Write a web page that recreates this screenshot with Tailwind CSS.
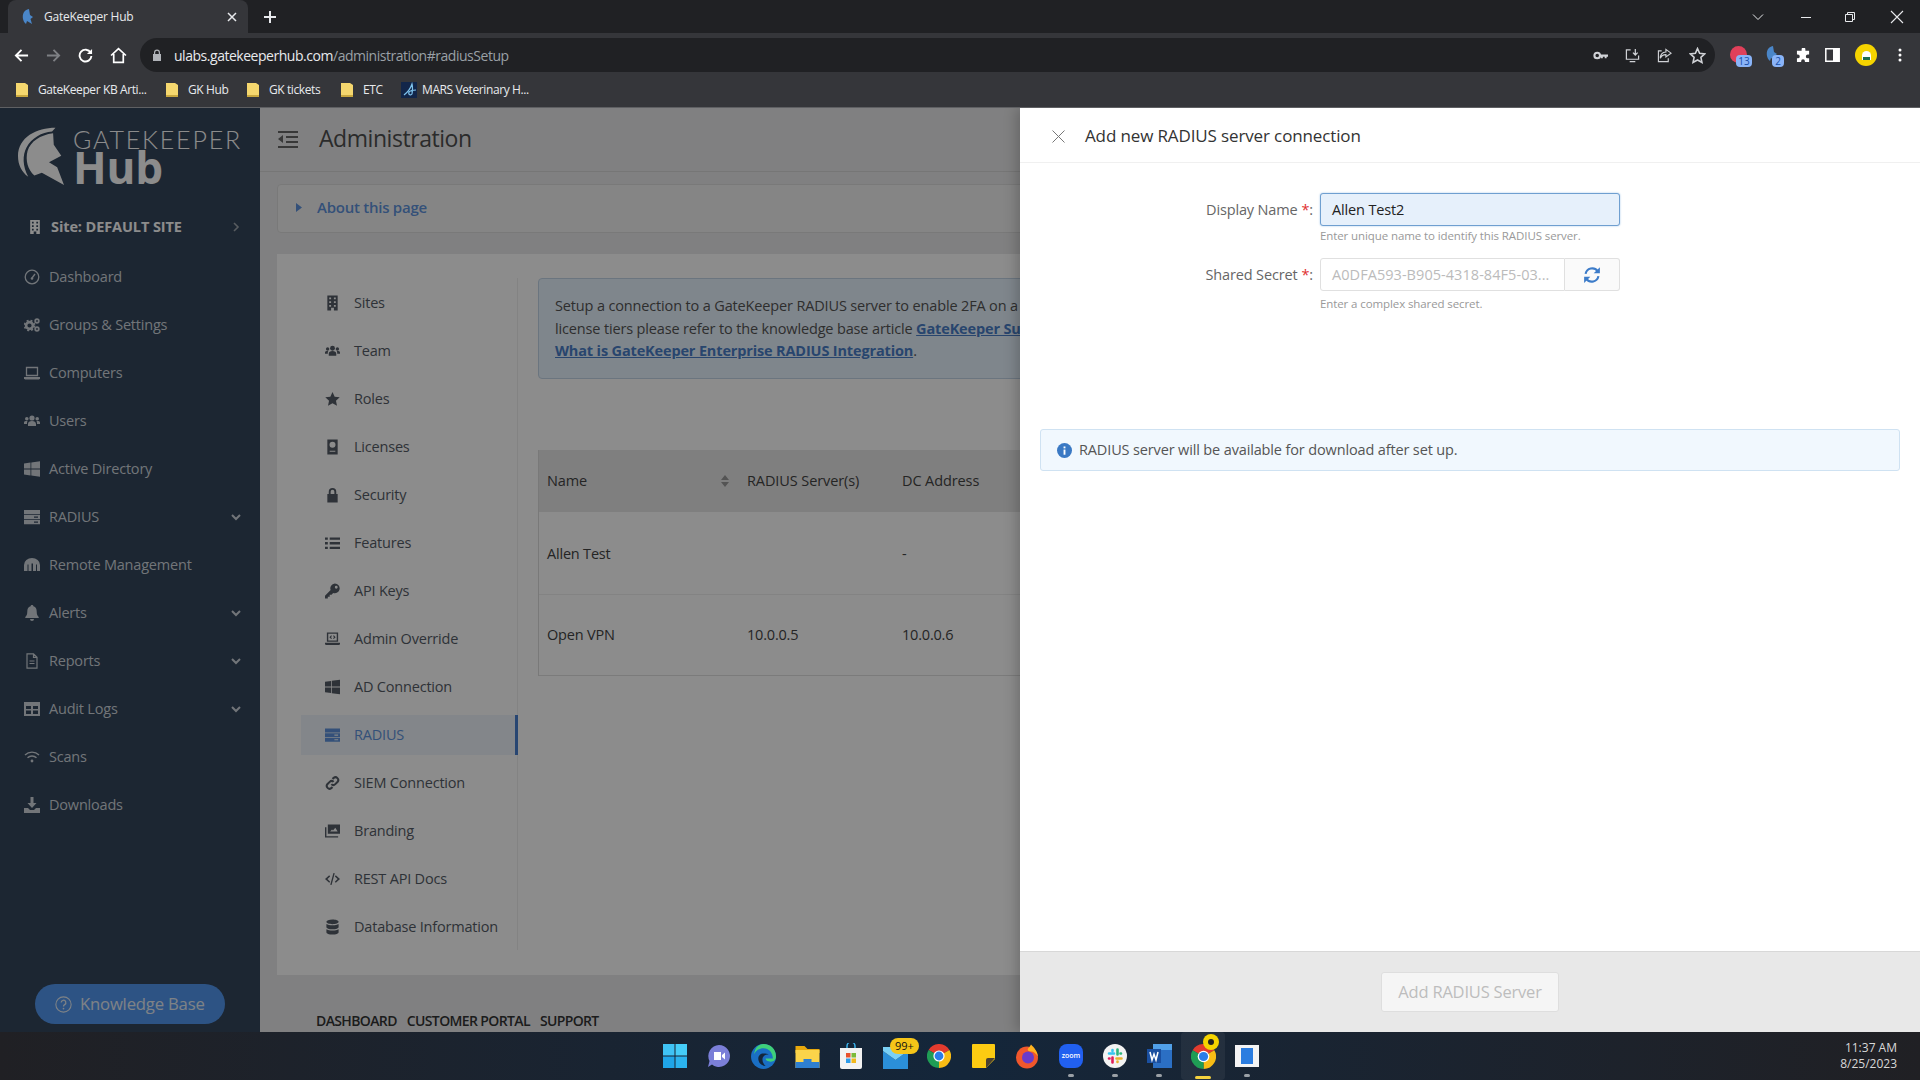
<!DOCTYPE html>
<html lang="en">
<head>
  <meta charset="UTF-8">
  <title>GateKeeper Hub</title>
  <script src="https://cdn.jsdelivr.net/npm/@tailwindcss/browser@4"></script>
</head>
<body class="h-screen overflow-hidden flex flex-col bg-[#202124] font-['Open_Sans',sans-serif]">

  <!-- shared icons -->
  <svg class="hidden">
    <symbol id="i-building" viewBox="0 0 16 16"><path fill="currentColor" fill-rule="evenodd" d="M2.5 0h11v16h-4v-3h-3v3h-4zM4.5 2v2h2V2zM9.5 2v2h2V2zM4.5 6v2h2V6zM9.5 6v2h2V6zM4.5 10v2h2v-2zM9.5 10v2h2v-2z"/></symbol>
    <symbol id="i-gauge" viewBox="0 0 16 16"><circle cx="8" cy="8" r="6.8" fill="none" stroke="currentColor" stroke-width="1.3"/><path d="M8 9l3-4" stroke="currentColor" stroke-width="1.4"/><circle cx="8" cy="9.5" r="1.3" fill="currentColor"/></symbol>
    <symbol id="i-cogs" viewBox="0 0 16 16"><circle cx="5.5" cy="8.5" r="3.4" fill="none" stroke="currentColor" stroke-width="2.6"/><circle cx="5.5" cy="8.5" r="5" fill="none" stroke="currentColor" stroke-width="1.6" stroke-dasharray="2 2"/><circle cx="13" cy="4" r="1.8" fill="none" stroke="currentColor" stroke-width="1.8"/><circle cx="13" cy="12" r="1.8" fill="none" stroke="currentColor" stroke-width="1.8"/></symbol>
    <symbol id="i-laptop" viewBox="0 0 16 16"><path fill="none" stroke="currentColor" stroke-width="1.3" d="M2.5 2.5h11v8h-11z"/><path fill="currentColor" d="M0 12h16v1.5l-1 1H1l-1-1z"/></symbol>
    <symbol id="i-users" viewBox="0 0 16 16"><circle cx="8" cy="5" r="2.6" fill="currentColor"/><circle cx="2.8" cy="5.8" r="1.8" fill="currentColor"/><circle cx="13.2" cy="5.8" r="1.8" fill="currentColor"/><path fill="currentColor" d="M4 13v-2c0-2 1.5-3 4-3s4 1 4 3v2zM0 11V9.5C0 8.4 1 8 3.5 8 3 8.800 3 10 3 11zM16 11V9.500C16 8.400 15 8 12.500 8 13 8.800 13 10 13 11z"/></symbol>
    <symbol id="i-windows" viewBox="0 0 16 16"><path fill="currentColor" d="M0 2.400l6.500-.9v6H0zM7.300 1.400L16 .2v7.300H7.300zM0 8.500h6.500v6L0 13.600zM7.300 8.500H16v7.300l-8.700-1.200z"/></symbol>
    <symbol id="i-server" viewBox="0 0 16 16"><path fill="currentColor" fill-rule="evenodd" d="M0 1h16v4.200H0zM0 6h16v4.200H0zM0 11h16v4.200H0zM10 7.500v1.200h4V7.500zM10 12.500v1.200h4v-1.200z"/></symbol>
    <symbol id="i-remote" viewBox="0 0 16 16"><path fill="currentColor" d="M0 14V8a8 7 0 0 1 16 0v6h-3V7.500h-1V14H9V6.500H7.500V14H4.500V7.500h-1V14z"/></symbol>
    <symbol id="i-bell" viewBox="0 0 16 16"><path fill="currentColor" d="M8 0c1 0 1.400.6 1.400 1.300C12 2 12.700 4 12.700 6.500c0 3 .8 4.300 2 5.500v1H1.300v-1c1.200-1.200 2-2.500 2-5.500 0-2.500.7-4.500 3.300-5.200C6.600.6 7 0 8 0zM6 14h4a2 2 0 0 1-4 0z"/></symbol>
    <symbol id="i-file" viewBox="0 0 16 16"><path fill="none" stroke="currentColor" stroke-width="1.200" d="M3 .8h6.500L13 4.300v10.900H3zM5.500 8h5M5.500 10.500h5M9.500 .8v3.500H13"/></symbol>
    <symbol id="i-table" viewBox="0 0 16 16"><path fill="currentColor" fill-rule="evenodd" d="M0 1h16v14H0zM2 5v3h5V5zM9 5v3h5V5zM2 9.500v3.500h5V9.500zM9 9.500v3.500h5V9.500z"/></symbol>
    <symbol id="i-wifi" viewBox="0 0 16 16"><path fill="none" stroke="currentColor" stroke-width="1.400" d="M1 6a10 10 0 0 1 14 0M3.500 8.800a6.400 6.400 0 0 1 9 0"/><circle cx="8" cy="12" r="1.400" fill="currentColor"/></symbol>
    <symbol id="i-download" viewBox="0 0 16 16"><path fill="currentColor" d="M6.500 0h3v6h3L8 11 3.500 6h3zM0 11h4l2 2h4l2-2h4v5H0z"/></symbol>
    <symbol id="i-star" viewBox="0 0 16 16"><path fill="currentColor" d="M8 .5l2.300 5 5.400.6-4 3.700 1.100 5.400L8 12.500l-4.800 2.700 1.100-5.400-4-3.700 5.400-.6z"/></symbol>
    <symbol id="i-book" viewBox="0 0 16 16"><path fill="currentColor" fill-rule="evenodd" d="M2.500 0h11v16h-11zM8 2.500a3.200 3.200 0 1 0 0 6.400 3.200 3.200 0 0 0 0-6.400zM5 12v1h6v-1z"/></symbol>
    <symbol id="i-lock" viewBox="0 0 16 16"><path fill="currentColor" d="M2.500 7H4V4.500a4 4 0 0 1 8 0V7h1.500v9h-11zM6 7h4V4.500a2 2 0 0 0-4 0z"/></symbol>
    <symbol id="i-list" viewBox="0 0 16 16"><path fill="currentColor" d="M0 2h3v2.500H0zM5 2h11v2.500H5zM0 7h3v2.500H0zM5 7h11v2.500H5zM0 12h3v2.500H0zM5 12h11v2.500H5z"/></symbol>
    <symbol id="i-key" viewBox="0 0 16 16"><path fill="currentColor" fill-rule="evenodd" d="M10.500 0a5.200 5.200 0 1 1-1.800 10.100L7 12H5v2H3v2H0v-3l6-6a5.200 5.200 0 0 1 4.500-7zM12 2.500a1.500 1.500 0 1 0 0 3 1.500 1.500 0 0 0 0-3z"/></symbol>
    <symbol id="i-laptopcode" viewBox="0 0 16 16"><path fill="currentColor" fill-rule="evenodd" d="M2 1h12v10H2zM3.500 2.500v7h9v-7zM0 12h16v1.500l-1 1H1l-1-1z"/><path fill="none" stroke="currentColor" stroke-width="1.200" d="M7 4.500L5.500 6 7 7.500M9 4.500L10.500 6 9 7.500"/></symbol>
    <symbol id="i-link" viewBox="0 0 16 16"><g fill="none" stroke="currentColor" stroke-width="2.200"><path d="M6.800 9.200a3 3 0 0 0 4.200 0l2.500-2.500a3 3 0 0 0-4.200-4.200L8 3.800"/><path d="M9.200 6.800a3 3 0 0 0-4.200 0L2.500 9.300a3 3 0 0 0 4.200 4.200L8 12.200"/></g></symbol>
    <symbol id="i-images" viewBox="0 0 16 16"><path fill="currentColor" fill-rule="evenodd" d="M3 1h13v10H3zM5.500 8.500h8l-2.500-4-2.500 3-1-1zM0 4h1.500v9.500H14V15H0z"/></symbol>
    <symbol id="i-code" viewBox="0 0 16 16"><path fill="currentColor" d="M4.500 4L5.500 5.200 2.600 8l2.900 2.800L4.500 12 0 8zM11.500 4L10.500 5.200 13.400 8l-2.900 2.800 1 1.200L16 8zM9 1.500l1.400.4L7 14.500l-1.400-.4z"/></symbol>
    <symbol id="i-db" viewBox="0 0 16 16"><path fill="currentColor" d="M8 0c3.800 0 6.500 1 6.500 2.500S11.800 5 8 5 1.500 4 1.500 2.500 4.200 0 8 0zM1.500 4.800C3 5.800 5.200 6.200 8 6.200s5-.4 6.500-1.400V8c0 1.500-2.700 2.500-6.500 2.500S1.500 9.500 1.500 8zM1.500 10.300c1.500 1 3.700 1.400 6.500 1.400s5-.4 6.500-1.400v3.200C14.500 15 11.800 16 8 16s-6.500-1-6.500-2.500z"/></symbol>
    <symbol id="i-chev" viewBox="0 0 12 12"><path fill="none" stroke="currentColor" stroke-width="2" d="M2 4l4 4 4-4"/></symbol>
    <symbol id="i-folder" viewBox="0 0 12 16"><path fill="#f5d76e" d="M0 1h9l3 2v12H0z"/><path fill="#c9a83f" d="M0 13h12v2H0z"/></symbol>
    <symbol id="i-chrome" viewBox="0 0 24 24"><path fill="#e33b2e" d="M12 12L1.600 6A12 12 0 0 1 22.400 6z"/><path fill="#f9bc15" d="M12 12L22.400 6A12 12 0 0 1 12 24z"/><path fill="#1f9d55" d="M12 12L12 24A12 12 0 0 1 1.600 6z"/><circle cx="12" cy="12" r="5.600" fill="#fff"/><circle cx="12" cy="12" r="4.400" fill="#2b7de9"/></symbol>
  </svg>

  <!-- tab strip -->
  <div class="h-[33px] shrink-0 flex items-end pl-2 text-[#e8eaed]">
    <div class="w-[240px] h-[33px] bg-[#35363a] rounded-t-lg flex items-center pl-3 pr-[10px]">
      <svg class="w-4 h-4 text-[#4a86c8] shrink-0" viewBox="0 0 16 16"><path fill="currentColor" d="M9 0C4 1 2 5 3 10c.5 2 1.500 4 3 5l1-3 5 3-1.500-5L13 8 10 6z"/></svg>
      <span class="ml-2 text-[12px] tracking-[-0.25px] truncate flex-1">GateKeeper Hub</span>
      <svg class="w-3 h-3" viewBox="0 0 12 12"><path stroke="currentColor" stroke-width="1.500" d="M2 2l8 8M10 2l-8 8"/></svg>
    </div>
    <svg class="w-3.5 h-3.5 ml-[15px] mb-[9px]" viewBox="0 0 14 14"><path stroke="currentColor" stroke-width="2" d="M7 1v12M1 7h12"/></svg>
    <div class="ml-auto h-[33px] flex items-center text-[#e8eaed]">
      <svg class="w-3 h-3 mr-[36px]" viewBox="0 0 12 12"><path fill="none" stroke="currentColor" d="M1 3.500l5 5 5-5"/></svg>
      <svg class="w-3 h-3 mr-[32px]" viewBox="0 0 12 12"><path stroke="currentColor" d="M1 6.500h10"/></svg>
      <svg class="w-3 h-3 mr-[34px]" viewBox="0 0 12 12"><path fill="none" stroke="currentColor" d="M1.500 3.500h7v7h-7zM3.500 3.500v-2h7v7h-2"/></svg>
      <svg class="w-3.5 h-3.5 mr-4" viewBox="0 0 14 14"><path stroke="currentColor" stroke-width="1.100" d="M1 1l12 12M13 1L1 13"/></svg>
    </div>
  </div>

  <!-- toolbar -->
  <div class="h-[39px] shrink-0 bg-[#35363a] pt-[5px] flex items-center text-[#dadce0]">
    <div class="flex items-center pl-[14px] gap-[17px] w-[140px] shrink-0">
      <svg class="w-[15px] h-[15px] text-white" viewBox="0 0 16 16"><path fill="none" stroke="currentColor" stroke-width="2" d="M15 8H2M8 2L2 8l6 6"/></svg>
      <svg class="w-[15px] h-[15px] text-[#7e8084]" viewBox="0 0 16 16"><path fill="none" stroke="currentColor" stroke-width="2" d="M1 8h13M8 2l6 6-6 6"/></svg>
      <svg class="w-[15px] h-[15px] text-white" viewBox="0 0 16 16"><path fill="none" stroke="currentColor" stroke-width="2" d="M13.500 5A6.300 6.300 0 1 0 14.300 8.500"/><path fill="currentColor" d="M15 1v5.500H9.500z"/></svg>
      <svg class="w-[17px] h-[17px] text-white" viewBox="0 0 16 16"><path fill="none" stroke="currentColor" stroke-width="1.600" d="M1 8l7-6.500L15 8M3.500 6.500V14.500h9V6.500"/></svg>
    </div>
    <div class="w-[1575px] h-[34px] rounded-full bg-[#202124] flex items-center pl-3 pr-[9px]">
      <svg class="w-[10px] h-[12px] text-[#b0b3b8]" viewBox="0 0 10 12"><path fill="currentColor" d="M1 5h1V3.500a3 3 0 0 1 6 0V5h1v7H1zM3.200 5h3.600V3.500a1.800 1.800 0 0 0-3.600 0z"/></svg>
      <span class="ml-[12px] text-[14px] tracking-[-0.47px] text-[#e8eaed]">ulabs.gatekeeperhub.com<span class="text-[#9aa0a6]">/administration#radiusSetup</span></span>
      <div class="ml-auto flex items-center gap-[17px] text-[#d0d2d6]">
        <svg class="w-[15px] h-[15px]" viewBox="0 0 16 16"><circle cx="4.500" cy="8" r="3" fill="none" stroke="currentColor" stroke-width="2.200"/><path fill="currentColor" d="M7 6.800h9v2.400h-1.500V11h-2V9.200H10.500V11H8.500V9.200H7z"/></svg>
        <svg class="w-[15px] h-[15px]" viewBox="0 0 16 16"><path fill="none" stroke="currentColor" stroke-width="1.300" d="M6 2H1.500v10h13V8M11 1v6M8.500 5L11 7.500 13.500 5M5 14.500h6"/></svg>
        <svg class="w-[15px] h-[15px]" viewBox="0 0 16 16"><path fill="none" stroke="currentColor" stroke-width="1.200" d="M9.500 1.500L15 5.500l-5.500 4V7C6 7 4.500 8.500 3.500 11c0-4 2-6.500 6-6.800zM5 3H1.500v11.500H12V11"/></svg>
        <svg class="w-[17px] h-[17px]" viewBox="0 0 16 16"><path fill="none" stroke="currentColor" stroke-width="1.500" d="M8 1.500l2 4.500 4.800.5-3.600 3.200 1 4.800L8 12.200l-4.200 2.300 1-4.800L1.200 6.500 6 6z"/></svg>
      </div>
    </div>
    <div class="flex items-center pl-[15px] gap-[12px]">
      <div class="relative w-[22px] h-[18px]">
        <div class="w-[17px] h-[17px] rounded-full bg-[#e0405a]"></div>
        <span class="absolute left-[6px] top-[9px] w-[16px] h-[12px] bg-[#8ab4f8] rounded-sm text-[10px] leading-[12px] text-center text-[#174ea6]">13</span>
      </div>
      <div class="relative w-[20px] h-[18px]">
        <svg class="w-4 h-4 text-[#4a86c8]" viewBox="0 0 16 16"><path fill="currentColor" d="M9 0C4 1 2 5 3 10c.5 2 1.500 4 3 5l1-3 5 3-1.500-5L13 8 10 6z"/></svg>
        <span class="absolute left-[8px] top-[9px] w-[12px] h-[12px] bg-[#8ab4f8] rounded-sm text-[10px] leading-[12px] text-center text-[#174ea6]">2</span>
      </div>
      <svg class="w-[15px] h-[15px] text-white" viewBox="0 0 16 16"><path fill="currentColor" d="M6 1.500a2 2 0 0 1 4 0V3h4v4h-1.500a2 2 0 0 0 0 4H14v4H9.500v-1a2 2 0 0 0-4 0v1H1v-4h1a2 2 0 0 0 0-4H1V3h5z"/></svg>
      <svg class="w-[15px] h-[14px] ml-[2px]" viewBox="0 0 15 14"><path fill="none" stroke="#fff" stroke-width="1.500" d="M.8.800h13.400v12.400H.8z"/><path fill="#fff" d="M8 1h6v12H8z"/></svg>
      <div class="w-[22px] h-[22px] ml-[3px] rounded-full bg-[#f5d400] flex items-center justify-center"><div class="w-[9px] h-[9px] bg-white rounded-t-full relative"><div class="absolute bottom-0 left-[1px] w-[7px] h-[3px] bg-[#1e6e4e]"></div></div></div>
      <svg class="w-[4px] h-[14px] ml-[9px] text-white" viewBox="0 0 4 14"><circle cx="2" cy="2" r="1.500" fill="currentColor"/><circle cx="2" cy="7" r="1.500" fill="currentColor"/><circle cx="2" cy="12" r="1.500" fill="currentColor"/></svg>
    </div>
  </div>

  <!-- bookmarks -->
  <div class="h-[36px] shrink-0 bg-[#35363a] border-b border-[#5f6063] flex items-center pl-4 text-[12px] tracking-[-0.4px] text-[#e8eaed]">
    <svg class="w-3 h-4 shrink-0"><use href="#i-folder"/></svg><span class="ml-[10px] w-[128px]">GateKeeper KB Arti...</span>
    <svg class="w-3 h-4 shrink-0"><use href="#i-folder"/></svg><span class="ml-[10px] w-[59px]">GK Hub</span>
    <svg class="w-3 h-4 shrink-0"><use href="#i-folder"/></svg><span class="ml-[10px] w-[72px]">GK tickets</span>
    <svg class="w-3 h-4 shrink-0"><use href="#i-folder"/></svg><span class="ml-[10px] w-[38px]">ETC</span>
    <svg class="w-4 h-4 shrink-0 bg-[#12264a] text-[#7fc4ee]" viewBox="0 0 16 16"><path fill="none" stroke="currentColor" stroke-width="1.200" d="M3 13C7 10 10 5 11 2c1 4 .5 7 0 10-1 1.500-4 1-3-2 2-2 5-2 7-2"/></svg><span class="ml-[5px]">MARS Veterinary H...</span>
  </div>

  <!-- page -->
  <div class="relative flex-1 min-h-0 flex overflow-hidden bg-[#e9eaec]">

    <!-- sidebar -->
    <aside class="w-[260px] shrink-0 bg-[#33455b] text-[#cfd6dd] flex flex-col">
      <div class="h-[95px] shrink-0 flex items-start pl-[18px] pt-[19px] text-white">
        <svg class="w-[46px] h-[58px] shrink-0" viewBox="55 80 135 170"><path fill="currentColor" d="M165 82C110 82 55 110 55 165c0 27 11 47 30 61-17-31-17-64-5-86 15-28 45-45 75-47z"/><path fill="currentColor" d="M158 98c-38 5-66 24-75 52-7 28 1 55 20 72l22-8 65 36-20-52-24-15 36-19-22-32z"/></svg>
        <div class="ml-[9px]">
          <div class="text-[25px] leading-[24px] font-['Lato',sans-serif] font-light tracking-[1.800px]">GATEKEEPER</div>
          <div class="text-[44px] leading-[33px] font-bold tracking-[-0.2px]">Hub</div>
        </div>
      </div>
      <div class="h-12 shrink-0 flex items-center pl-7 pr-[20px] text-white">
        <svg class="w-[14px] h-4 shrink-0"><use href="#i-building"/></svg>
        <span class="ml-[9px] text-[14.5px] font-bold tracking-[-0.1px] flex-1">Site: DEFAULT SITE</span>
        <svg class="w-2 h-3 text-[#a0a8b0]" viewBox="0 0 8 12"><path fill="none" stroke="currentColor" stroke-width="1.600" d="M2 2l4 4-4 4"/></svg>
      </div>
      <nav class="pt-[2px] text-[14.5px] tracking-[-0.2px]">
        <a class="h-12 flex items-center pl-6 pr-[18px]"><svg class="w-4 h-4 shrink-0"><use href="#i-gauge"/></svg><span class="ml-[9px] flex-1">Dashboard</span></a>
        <a class="h-12 flex items-center pl-6 pr-[18px]"><svg class="w-4 h-4 shrink-0"><use href="#i-cogs"/></svg><span class="ml-[9px] flex-1">Groups &amp; Settings</span></a>
        <a class="h-12 flex items-center pl-6 pr-[18px]"><svg class="w-4 h-4 shrink-0"><use href="#i-laptop"/></svg><span class="ml-[9px] flex-1">Computers</span></a>
        <a class="h-12 flex items-center pl-6 pr-[18px]"><svg class="w-4 h-4 shrink-0"><use href="#i-users"/></svg><span class="ml-[9px] flex-1">Users</span></a>
        <a class="h-12 flex items-center pl-6 pr-[18px]"><svg class="w-4 h-4 shrink-0"><use href="#i-windows"/></svg><span class="ml-[9px] flex-1">Active Directory</span></a>
        <a class="h-12 flex items-center pl-6 pr-[18px]"><svg class="w-4 h-4 shrink-0"><use href="#i-server"/></svg><span class="ml-[9px] flex-1">RADIUS</span><svg class="w-3 h-3"><use href="#i-chev"/></svg></a>
        <a class="h-12 flex items-center pl-6 pr-[18px]"><svg class="w-4 h-4 shrink-0"><use href="#i-remote"/></svg><span class="ml-[9px] flex-1">Remote Management</span></a>
        <a class="h-12 flex items-center pl-6 pr-[18px]"><svg class="w-4 h-4 shrink-0"><use href="#i-bell"/></svg><span class="ml-[9px] flex-1">Alerts</span><svg class="w-3 h-3"><use href="#i-chev"/></svg></a>
        <a class="h-12 flex items-center pl-6 pr-[18px]"><svg class="w-4 h-4 shrink-0"><use href="#i-file"/></svg><span class="ml-[9px] flex-1">Reports</span><svg class="w-3 h-3"><use href="#i-chev"/></svg></a>
        <a class="h-12 flex items-center pl-6 pr-[18px]"><svg class="w-4 h-4 shrink-0"><use href="#i-table"/></svg><span class="ml-[9px] flex-1">Audit Logs</span><svg class="w-3 h-3"><use href="#i-chev"/></svg></a>
        <a class="h-12 flex items-center pl-6 pr-[18px]"><svg class="w-4 h-4 shrink-0"><use href="#i-wifi"/></svg><span class="ml-[9px] flex-1">Scans</span></a>
        <a class="h-12 flex items-center pl-6 pr-[18px]"><svg class="w-4 h-4 shrink-0"><use href="#i-download"/></svg><span class="ml-[9px] flex-1">Downloads</span></a>
      </nav>
      <div class="mt-auto mb-2 mx-auto w-[190px] h-10 rounded-full bg-[#5398f0] flex items-center pl-[20px] text-[#e6edf5] text-[16.700px] tracking-[-0.2px]">
        <svg class="w-[17px] h-[17px] shrink-0" viewBox="0 0 16 16"><circle cx="8" cy="8" r="7.200" fill="none" stroke="currentColor" stroke-width="1"/><path fill="none" stroke="currentColor" stroke-width="1.200" d="M5.800 6.200a2.200 2.200 0 1 1 3.300 1.900c-.7.4-1.100.8-1.100 1.700"/><circle cx="8" cy="11.800" r=".8" fill="currentColor"/></svg>
        <span class="ml-[8px]">Knowledge Base</span>
      </div>
    </aside>

    <!-- main -->
    <main class="flex-1 min-w-0 flex flex-col">
      <div class="h-[64px] shrink-0 border-b border-[#d8d8d8] flex items-center pl-[17px]">
        <svg class="w-[22px] h-[19px] text-[#666]" viewBox="0 0 22 19"><path fill="currentColor" d="M1 1h20v2H1zM9 6h12v2H9zM9 11h12v2H9zM1 16h20v2H1zM6 5v8L1 9z"/></svg>
        <h1 class="ml-[20px] -mt-[2px] text-[23px] text-[#4f4f4f] tracking-[-0.45px]">Administration</h1>
      </div>
      <div class="mx-[17px] mt-[12px] h-[49px] shrink-0 bg-[#f3f3f3] border border-[#dcdcdc] rounded-sm flex items-center pl-[18px] pb-[2px] text-[#5f93dc] text-[15px] font-semibold tracking-[-0.25px]">
        <svg class="w-[6px] h-[9px] mr-[15px]" viewBox="0 0 6 9"><path fill="currentColor" d="M0 0l6 4.500L0 9z"/></svg>
        About this page
      </div>
      <div class="mx-[17px] mt-[21px] h-[721px] shrink-0 bg-white flex pt-6 pl-6">
        <ul class="w-[217px] h-[672px] shrink-0 border-r border-[#eeeeee] pt-[5px] flex flex-col gap-2 text-[14.5px] tracking-[-0.2px] text-[#555c66]">
          <li class="h-10 flex items-center pl-[24px]"><svg class="w-[15px] h-[16px] shrink-0"><use href="#i-building"/></svg><span class="ml-[14px]">Sites</span></li>
          <li class="h-10 flex items-center pl-[24px]"><svg class="w-[15px] h-[16px] shrink-0"><use href="#i-users"/></svg><span class="ml-[14px]">Team</span></li>
          <li class="h-10 flex items-center pl-[24px]"><svg class="w-[15px] h-[16px] shrink-0"><use href="#i-star"/></svg><span class="ml-[14px]">Roles</span></li>
          <li class="h-10 flex items-center pl-[24px]"><svg class="w-[15px] h-[16px] shrink-0"><use href="#i-book"/></svg><span class="ml-[14px]">Licenses</span></li>
          <li class="h-10 flex items-center pl-[24px]"><svg class="w-[15px] h-[16px] shrink-0"><use href="#i-lock"/></svg><span class="ml-[14px]">Security</span></li>
          <li class="h-10 flex items-center pl-[24px]"><svg class="w-[15px] h-[16px] shrink-0"><use href="#i-list"/></svg><span class="ml-[14px]">Features</span></li>
          <li class="h-10 flex items-center pl-[24px]"><svg class="w-[15px] h-[16px] shrink-0"><use href="#i-key"/></svg><span class="ml-[14px]">API Keys</span></li>
          <li class="h-10 flex items-center pl-[24px]"><svg class="w-[15px] h-[16px] shrink-0"><use href="#i-laptopcode"/></svg><span class="ml-[14px]">Admin Override</span></li>
          <li class="h-10 flex items-center pl-[24px]"><svg class="w-[15px] h-[16px] shrink-0"><use href="#i-windows"/></svg><span class="ml-[14px]">AD Connection</span></li>
          <li class="h-10 flex items-center pl-[24px] bg-[#eef4fb] border-r-[3px] border-[#4a80d0] -mr-px text-[#5f93dc]"><svg class="w-[15px] h-[16px] shrink-0"><use href="#i-server"/></svg><span class="ml-[14px]">RADIUS</span></li>
          <li class="h-10 flex items-center pl-[24px]"><svg class="w-[15px] h-[16px] shrink-0"><use href="#i-link"/></svg><span class="ml-[14px]">SIEM Connection</span></li>
          <li class="h-10 flex items-center pl-[24px]"><svg class="w-[15px] h-[16px] shrink-0"><use href="#i-images"/></svg><span class="ml-[14px]">Branding</span></li>
          <li class="h-10 flex items-center pl-[24px]"><svg class="w-[15px] h-[16px] shrink-0"><use href="#i-code"/></svg><span class="ml-[14px]">REST API Docs</span></li>
          <li class="h-10 flex items-center pl-[24px]"><svg class="w-[15px] h-[16px] shrink-0"><use href="#i-db"/></svg><span class="ml-[14px]">Database Information</span></li>
        </ul>
        <div class="flex-1 min-w-0 pl-5 overflow-hidden">
          <div class="h-[101px] bg-[#e8f4ff] border border-[#c3d5e8] rounded-sm pl-[16px] pt-[16px] text-[14.5px] leading-[22.500px] tracking-[-0.15px] text-[#555] whitespace-nowrap">
            <p>Setup a connection to a GateKeeper RADIUS server to enable 2FA on a</p>
            <p>license tiers please refer to the knowledge base article <a class="font-bold underline text-[#4a7fc8]">GateKeeper Su</a></p>
            <p><a class="font-bold underline text-[#4a7fc8]">What is GateKeeper Enterprise RADIUS Integration</a>.</p>
          </div>
          <div class="mt-[71px] border-l border-[#dcdcdc] text-[14.5px] tracking-[-0.2px] text-[#444]">
            <div class="h-[62px] bg-[#e8e8e8] flex items-center font-medium tracking-[-0.1px]">
              <span class="w-[208px] pl-[8px] flex items-center">Name<svg class="w-2 h-3 ml-auto mr-[18px] text-[#999]" viewBox="0 0 8 12"><path fill="currentColor" d="M4 0l4 5H0zM4 12L0 7h8z"/></svg></span>
              <span class="w-[155px]">RADIUS Server(s)</span>
              <span>DC Address</span>
            </div>
            <div class="h-[83px] pt-[2px] border-b border-[#eeeeee] flex items-center">
              <span class="w-[208px] pl-[8px]">Allen Test</span>
              <span class="w-[155px]"></span>
              <span>-</span>
            </div>
            <div class="h-[81px] border-b border-[#e0e0e0] flex items-center">
              <span class="w-[208px] pl-[8px]">Open VPN</span>
              <span class="w-[155px]">10.0.0.5</span>
              <span>10.0.0.6</span>
            </div>
          </div>
        </div>
      </div>
      <div class="pl-[56px] mt-[35px] flex gap-[10px] text-[14px] font-semibold tracking-[-0.63px] text-[#333]">
        <span>DASHBOARD</span><span>CUSTOMER PORTAL</span><span>SUPPORT</span>
      </div>
    </main>

    <!-- dim layer -->
    <div class="absolute inset-0 bg-black/45"></div>

    <!-- drawer -->
    <section class="absolute top-0 bottom-0 right-0 w-[900px] bg-white flex flex-col shadow-[-4px_0_12px_rgba(0,0,0,0.2)]">
      <div class="h-[55px] shrink-0 border-b border-[#f0f0f0] pt-[2px] flex items-center pl-[32px]">
        <svg class="w-[13px] h-[13px] text-[#777]" viewBox="0 0 13 13"><path stroke="currentColor" stroke-width="1" d="M.5.500l12 12M12.500.500l-12 12"/></svg>
        <h2 class="ml-[20px] text-[17px] font-medium tracking-[-0.13px] text-[#333]">Add new RADIUS server connection</h2>
      </div>
      <div class="flex-1 min-h-0 pt-[30px]">
        <div class="grid grid-cols-[293px_300px] gap-x-[7px] text-[14.5px] tracking-[-0.15px]">
          <label class="h-[33px] flex items-center justify-end text-[#666]">Display Name <span class="text-[#e03030] ml-1">*</span>:</label>
          <div class="h-[33px] bg-[#e6f0fb] border border-[#6f9fd0] rounded-[3px] shadow-[0_0_2px_#9cc0e6] flex items-center pl-[11px] text-[#222]">Allen Test2</div>
          <div></div>
          <p class="h-[32px] pt-[1px] text-[11.500px] text-[#999] tracking-[-0.1px]">Enter unique name to identify this RADIUS server.</p>
          <label class="h-[33px] flex items-center justify-end text-[#666]">Shared Secret <span class="text-[#e03030] ml-1">*</span>:</label>
          <div class="h-[33px] flex">
            <div class="w-[245px] border border-[#e0e0e0] rounded-l-[3px] flex items-center pl-[11px] text-[#bbb] tracking-[0.05px] whitespace-nowrap">A0DFA593-B905-4318-84F5-03...</div>
            <div class="flex-1 border border-l-0 border-[#e0e0e0] rounded-r-[3px] bg-[#fafafa] flex items-center justify-center">
              <svg class="w-[18px] h-[18px] text-[#3d7cc9]" viewBox="0 0 16 16"><path fill="none" stroke="currentColor" stroke-width="1.900" d="M2.300 7A6 6 0 0 1 13 4.500M13.700 9A6 6 0 0 1 3 11.500"/><path fill="currentColor" d="M15 1v5.500H9.500zM1 15V9.500h5.500z"/></svg>
            </div>
          </div>
          <div></div>
          <p class="pt-[4px] text-[11.500px] text-[#999] tracking-[-0.1px]">Enter a complex shared secret.</p>
        </div>
        <div class="mx-[20px] mt-[117px] h-[42px] bg-[#f1f8fe] border border-[#cfe2f2] rounded-[3px] flex items-center pl-[16px] text-[14.5px] tracking-[-0.14px] text-[#555]">
          <svg class="w-[15px] h-[15px] shrink-0" viewBox="0 0 16 16"><circle cx="8" cy="8" r="8" fill="#3a79c4"/><rect x="7" y="7" width="2" height="5.500" fill="#fff"/><rect x="7" y="3.700" width="2" height="2" fill="#fff"/></svg>
          <span class="ml-[7px]">RADIUS server will be available for download after set up.</span>
        </div>
      </div>
      <div class="h-[81px] shrink-0 bg-[#e8e8e8] border-t border-[#d8d8d8] flex items-center justify-center">
        <button class="w-[178px] h-[40px] bg-[#f5f5f5] border border-[#dedede] rounded-[3px] text-[16.500px] tracking-[-0.2px] text-[#bdbdbd]">Add RADIUS Server</button>
      </div>
    </section>
  </div>

  <!-- windows taskbar -->
  <footer class="relative h-[48px] shrink-0 bg-gradient-to-r from-[#202024] via-[#14263a] to-[#202024] flex items-center">
    <div class="absolute left-[653px] top-0 h-[48px] flex items-center">
      <div class="w-[44px] flex justify-center">
        <svg class="w-[24px] h-[24px]" viewBox="0 0 24 24"><path fill="#3fc3f5" d="M0 0h11.500v11.500H0z"/><path fill="#45cdf8" d="M12.500 0H24v11.500H12.500z"/><path fill="#1fa5e8" d="M0 12.500h11.500V24H0z"/><path fill="#2bb3ee" d="M12.500 12.500H24V24H12.500z"/></svg>
      </div>
      <div class="w-[44px] flex justify-center">
        <svg class="w-[24px] h-[24px]" viewBox="0 0 24 24"><path fill="#7b7fd8" d="M12 1a11 11 0 1 1-7 19.500L1 23l1.500-6A11 11 0 0 1 12 1z"/><path fill="#fff" d="M7 8h7v8H7zM15 11l3-2.500v7L15 13z"/></svg>
      </div>
      <div class="w-[44px] flex justify-center">
        <svg class="w-[25px] h-[25px]" viewBox="0 0 24 24"><circle cx="12" cy="12" r="12" fill="#1a6fc4"/><path fill="#3fd07a" d="M12 0c7 0 12 5 12 12 0 3-2 5-5 5-3 0-5-1.500-5-3h7C21 8 17 4 12 4 8 4 4.500 6 3 10 3.500 4 7 0 12 0z"/><path fill="#14263a" d="M12 9c-3 0-5 2-5 5 0 4 3 7 7 7-2-2-3-4-3-6 0-3 2-5 6-5-1-.7-3-1-5-1z"/></svg>
      </div>
      <div class="w-[44px] flex justify-center">
        <svg class="w-[25px] h-[24px]" viewBox="0 0 24 24"><path fill="#e8a80c" d="M0 2h9l3 3h12v4H0z"/><path fill="#fbd44a" d="M0 6h24v18H0z"/><path fill="#2e7fd0" d="M8 15h8v3h8v-0 6H0v-6h8z"/></svg>
      </div>
      <div class="w-[44px] flex justify-center">
        <svg class="w-[24px] h-[26px]" viewBox="0 0 24 26"><path fill="none" stroke="#3ab0e8" stroke-width="1.500" d="M8 5V3a4 4 0 0 1 8 0v2"/><path fill="#f2f2f2" d="M1 5h22v19a2 2 0 0 1-2 2H3a2 2 0 0 1-2-2z"/><path fill="#e8512c" d="M7 10h4.500v4.500H7z"/><path fill="#7cbb3a" d="M12.500 10H17v4.500h-4.500z"/><path fill="#2e9be8" d="M7 15.500h4.500V20H7z"/><path fill="#f2b81c" d="M12.500 15.500H17V20h-4.500z"/></svg>
      </div>
      <div class="w-[44px] flex justify-center relative">
        <svg class="w-[25px] h-[22px] mt-[4px]" viewBox="0 0 25 22"><path fill="#2b8fd8" d="M0 4l12.500 9L25 4v18H0z"/><path fill="#7ad0f5" d="M0 0h25v4l-12.500 9L0 4z"/></svg>
        <span class="absolute left-[17px] -top-[5px] h-[16px] px-[5px] rounded-full bg-[#f5c518] text-[11px] leading-[16px] text-[#111]">99+</span>
      </div>
      <div class="w-[44px] flex justify-center"><svg class="w-[24px] h-[24px]"><use href="#i-chrome"/></svg></div>
      <div class="w-[44px] flex justify-center">
        <svg class="w-[23px] h-[24px]" viewBox="0 0 23 24"><path fill="#fccb12" d="M0 1a1 1 0 0 1 1-1h21a1 1 0 0 1 1 1v14L14 24H1a1 1 0 0 1-1-1z"/><path fill="#4a4030" d="M23 14L14 24V16a2 2 0 0 1 2-2z"/></svg>
      </div>
      <div class="w-[44px] flex justify-center">
        <svg class="w-[24px] h-[25px]" viewBox="0 0 24 24"><circle cx="12" cy="13" r="11" fill="#f0572c"/><path fill="#ffb31f" d="M16 0c3 3 6 6 7 12-2-3-4-5-7-5-2 0-4-1-3-3 1-1 2-2 3-4z"/><circle cx="13" cy="13" r="6" fill="#6a3bc9"/></svg>
      </div>
      <div class="w-[44px] flex flex-col items-center relative">
        <div class="w-[24px] h-[24px] rounded-[8px] bg-[#2160f0] flex items-center justify-center text-[7px] text-white font-semibold">zoom</div>
        <span class="absolute -bottom-[9px] w-[6px] h-[3px] rounded-full bg-[#9aa0a6]"></span>
      </div>
      <div class="w-[44px] flex flex-col items-center relative">
        <svg class="w-[24px] h-[24px]" viewBox="0 0 24 24"><circle cx="12" cy="12" r="12" fill="#f3f3f3"/><path stroke="#36c5f0" stroke-width="2.600" stroke-linecap="round" d="M6 9.500h5M9.500 6v1"/><path stroke="#2eb67d" stroke-width="2.600" stroke-linecap="round" d="M14.500 5.500v5M18 9.500h-.5"/><path stroke="#ecb22e" stroke-width="2.600" stroke-linecap="round" d="M13.500 14.500h5M14.500 18v-.5"/><path stroke="#e01e5a" stroke-width="2.600" stroke-linecap="round" d="M9.500 13.500v5M6 14.500h.5"/></svg>
        <span class="absolute -bottom-[9px] w-[6px] h-[3px] rounded-full bg-[#9aa0a6]"></span>
      </div>
      <div class="w-[44px] flex flex-col items-center relative">
        <svg class="w-[25px] h-[24px]" viewBox="0 0 25 24"><path fill="#2b6fc4" d="M6 0h19v24H6z"/><path fill="#51a0e8" d="M6 0h19v6H6z"/><path fill="#1a4fa0" d="M0 5h14v14H0z"/><path fill="none" stroke="#fff" stroke-width="1.500" d="M3 8l2 8 2-6 2 6 2-8"/></svg>
        <span class="absolute -bottom-[9px] w-[6px] h-[3px] rounded-full bg-[#9aa0a6]"></span>
      </div>
      <div class="w-[44px] h-[48px] flex flex-col items-center justify-center relative bg-white/5 rounded">
        <svg class="w-[25px] h-[25px]"><use href="#i-chrome"/></svg>
        <span class="absolute right-[6px] top-[2px] w-[16px] h-[16px] rounded-full bg-[#f5d400] flex items-center justify-center"><span class="w-[6px] h-[6px] rounded-full bg-[#222]"></span></span>
        <span class="absolute bottom-[1px] w-[16px] h-[3px] rounded-full bg-[#f5d23e]"></span>
      </div>
      <div class="w-[44px] flex flex-col items-center relative">
        <svg class="w-[24px] h-[22px]" viewBox="0 0 24 22"><path fill="#f4f4f4" d="M0 0h24v22H0z"/><path fill="#2b7de0" d="M6 3h12v16H6z"/></svg>
        <span class="absolute -bottom-[10px] w-[6px] h-[3px] rounded-full bg-[#9aa0a6]"></span>
      </div>
    </div>
    <div class="ml-auto pr-[23px] text-right text-[12px] leading-[16px] text-[#d8d8d8]">
      <p>11:37 AM</p>
      <p>8/25/2023</p>
    </div>
  </footer>
</body>
</html>
